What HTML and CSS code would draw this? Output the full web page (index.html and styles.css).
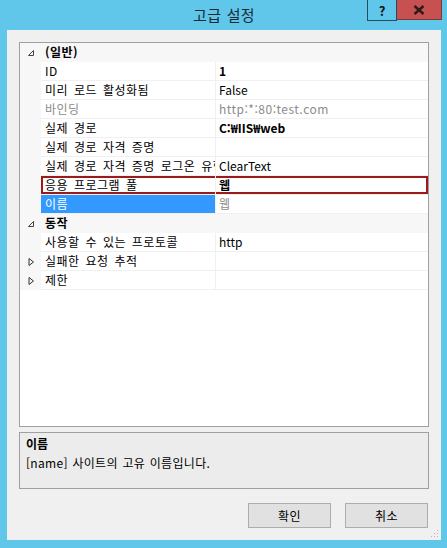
FILE: index.html
```html
<!DOCTYPE html>
<html lang="ko">
<head>
<meta charset="utf-8">
<title>고급 설정</title>
<link rel="stylesheet" href="styles.css">
</head>
<body>
<div class="window">
  <div class="titlebar">
    <div class="tb-side"></div>
    <div class="title">고급 설정</div>
    <div class="tb-side caption">
      <div class="cbtn help">?</div>
      <div class="cbtn close">
        <svg width="12" height="10" viewBox="0 0 12 10"><path d="M1.5 1 L10.5 9 M10.5 1 L1.5 9" stroke="#2a1a1a" stroke-width="2.4" fill="none"/></svg>
      </div>
    </div>
  </div>
  <div class="client">
    <div class="grid">
      <div class="row cat">
        <span class="gut"><svg width="8" height="8" viewBox="0 0 8 8"><path d="M6.5 1.5 L6.5 6.5 L1.5 6.5 Z" fill="none" stroke="#444" stroke-width="1"/></svg></span>
        <span class="cname">(일반)</span>
      </div>
      <div class="row">
        <span class="gut"></span>
        <div class="cells"><span class="name">ID</span><span class="val bold">1</span></div>
      </div>
      <div class="row">
        <span class="gut"></span>
        <div class="cells"><span class="name">미리 로드 활성화됨</span><span class="val">False</span></div>
      </div>
      <div class="row dim">
        <span class="gut"></span>
        <div class="cells"><span class="name">바인딩</span><span class="val wide">http:*:80:test.com</span></div>
      </div>
      <div class="row">
        <span class="gut"></span>
        <div class="cells"><span class="name">실제 경로</span><span class="val bold">C:₩IIS₩web</span></div>
      </div>
      <div class="row">
        <span class="gut"></span>
        <div class="cells"><span class="name">실제 경로 자격 증명</span><span class="val"></span></div>
      </div>
      <div class="row">
        <span class="gut"></span>
        <div class="cells"><span class="name">실제 경로 자격 증명 로그온 유형</span><span class="val">ClearText</span></div>
      </div>
      <div class="row">
        <span class="gut"></span>
        <div class="cells focused"><span class="name">응용 프로그램 풀</span><span class="val bold">웹</span></div>
      </div>
      <div class="row">
        <span class="gut"></span>
        <div class="cells"><span class="name selected">이름</span><span class="val gray">웹</span></div>
      </div>
      <div class="row cat">
        <span class="gut"><svg width="8" height="8" viewBox="0 0 8 8"><path d="M6.5 1.5 L6.5 6.5 L1.5 6.5 Z" fill="none" stroke="#444" stroke-width="1"/></svg></span>
        <span class="cname">동작</span>
      </div>
      <div class="row">
        <span class="gut"></span>
        <div class="cells"><span class="name">사용할 수 있는 프로토콜</span><span class="val">http</span></div>
      </div>
      <div class="row">
        <span class="gut"><svg width="8" height="10" viewBox="0 0 8 10"><path d="M2 1.5 L6.5 5 L2 8.5 Z" fill="none" stroke="#333" stroke-width="1"/></svg></span>
        <div class="cells"><span class="name">실패한 요청 추적</span><span class="val"></span></div>
      </div>
      <div class="row">
        <span class="gut"><svg width="8" height="10" viewBox="0 0 8 10"><path d="M2 1.5 L6.5 5 L2 8.5 Z" fill="none" stroke="#333" stroke-width="1"/></svg></span>
        <div class="cells"><span class="name">제한</span><span class="val"></span></div>
      </div>
    </div>
    <div class="desc">
      <div class="desc-title">이름</div>
      <div class="desc-text">[name] 사이트의 고유 이름입니다.</div>
    </div>
    <div class="buttons">
      <button class="btn">확인</button>
      <button class="btn">취소</button>
    </div>
    <svg class="grip" width="8" height="8" viewBox="0 0 8 8">
      <rect x="6" y="0" width="1" height="1" fill="#b8b8b8"/>
      <rect x="3" y="3" width="1" height="1" fill="#b8b8b8"/>
      <rect x="6" y="3" width="1" height="1" fill="#b8b8b8"/>
      <rect x="0" y="6" width="1" height="1" fill="#b8b8b8"/>
      <rect x="3" y="6" width="1" height="1" fill="#b8b8b8"/>
      <rect x="6" y="6" width="1" height="1" fill="#b8b8b8"/>
    </svg>
  </div>
</div>
</body>
</html>
```

FILE: styles.css
```css
* { box-sizing: border-box; }
html, body { margin: 0; padding: 0; }
body {
  background: #60c6ea;
  font-family: "Noto Sans CJK KR", "Noto Sans", sans-serif;
  font-size: 12px;
  color: #000;
}
.window {
  width: 447px;
  height: 548px;
  display: flex;
  flex-direction: column;
  background: #60c6ea;
}
.titlebar {
  height: 30px;
  display: grid;
  grid-template-columns: 1fr auto 1fr;
  align-items: start;
}
.title {
  font-size: 15px;
  line-height: 30px;
  color: #1a2a33;
  padding-left: 1px;
  letter-spacing: 0.3px;
  word-spacing: 1px;
}
.caption {
  display: flex;
  justify-content: flex-end;
  margin-right: 5px;
}
.cbtn {
  height: 21px;
  display: flex;
  align-items: center;
  justify-content: center;
}
.help {
  width: 30px;
  border: 1px solid #2d4a5a;
  border-top: none;
  font-weight: bold;
  font-size: 13px;
  color: #111;
}
.close {
  width: 45px;
  height: 20px;
  background: #c75050;
  border: 1px solid #7a3a3a;
  border-top: none;
  border-left: none;
}
.client {
  position: relative;
  flex: 1;
  margin: 0 6px 8px 7px;
  background: #f0f0f0;
  padding: 12px 12px 12px 12px;
  display: flex;
  flex-direction: column;
}
.grid {
  height: 385px;
  border: 1px solid #a0a0a0;
  background: #fff;
  display: flex;
  flex-direction: column;
}
.row {
  height: 19px;
  display: flex;
  align-items: stretch;
  line-height: 18px;
  white-space: nowrap;
}
.gut {
  width: 21px;
  flex: none;
  background: #f7f7f7;
  display: flex;
  align-items: center;
  justify-content: center;
}
.cat {
  background: #f7f7f7;
  font-weight: bold;
}
.cat .cname {
  padding-left: 4px;
  letter-spacing: 0.5px;
}
.cells {
  flex: 1;
  display: flex;
  border-bottom: 1px solid #f0f0f0;
}
.name {
  width: 175px;
  flex: none;
  padding-left: 4px;
  border-right: 1px solid #f0f0f0;
  overflow: hidden;
  letter-spacing: 0.5px;
  word-spacing: 2px;
}
.val {
  flex: 1;
  padding-left: 3px;
  overflow: hidden;
}
.wide { letter-spacing: 0.5px; }
.bold { font-weight: bold; }
.dim { color: #8c8c8c; }
.gray { color: #8c8c8c; }
.selected {
  background: #3399ff;
  color: #fff;
}
.focused {
  box-shadow: inset 0 0 0 2px #9c1a1a;
}
.desc {
  margin-top: 5px;
  height: 57px;
  border: 1px solid #a0a0a0;
  background: #ececec;
  padding: 1px 6px;
  line-height: 19px;
}
.desc-title { font-weight: bold; }
.desc-text { letter-spacing: 0.3px; word-spacing: 1px; }
.buttons {
  margin-top: 14px;
  display: flex;
  justify-content: flex-end;
  gap: 14px;
  padding-right: 1px;
}
.btn {
  width: 83px;
  height: 25px;
  background: #e1e1e1;
  border: 1px solid #adadad;
  font-family: "Noto Sans CJK KR", "Noto Sans", sans-serif;
  font-size: 12px;
  color: #000;
  padding: 0;
  letter-spacing: 0.5px;
}
.grip {
  position: absolute;
  right: 2px;
  bottom: 2px;
}
```
